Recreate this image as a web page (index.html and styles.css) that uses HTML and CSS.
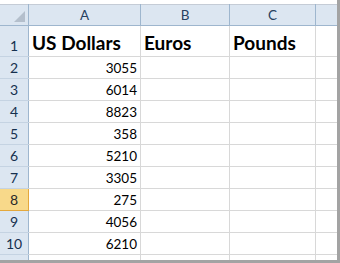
FILE: index.html
```html
<!DOCTYPE html>
<html lang="en">

<head>
    <meta charset="UTF-8">
    <title>Sheet1</title>
    <link rel="stylesheet" href="styles.css">
</head>

<body>
    <div class="sheet">
        <table class="grid">
            <thead>
                <tr>
                    <th class="corner"><span class="tri"></span></th>
                    <th class="col-a">A</th>
                    <th class="col-b">B</th>
                    <th class="col-c">C</th>
                    <th class="col-d"></th>
                </tr>
            </thead>
            <tbody>
                <tr class="title-row">
                    <th>1</th>
                    <td class="title">US Dollars</td>
                    <td class="title">Euros</td>
                    <td class="title">Pounds</td>
                    <td></td>
                </tr>
                <tr><th>2</th><td class="num">3055</td><td></td><td></td><td></td></tr>
                <tr><th>3</th><td class="num">6014</td><td></td><td></td><td></td></tr>
                <tr><th>4</th><td class="num">8823</td><td></td><td></td><td></td></tr>
                <tr><th>5</th><td class="num">358</td><td></td><td></td><td></td></tr>
                <tr><th>6</th><td class="num">5210</td><td></td><td></td><td></td></tr>
                <tr><th>7</th><td class="num">3305</td><td></td><td></td><td></td></tr>
                <tr><th class="active">8</th><td class="num">275</td><td></td><td></td><td></td></tr>
                <tr><th>9</th><td class="num">4056</td><td></td><td></td><td></td></tr>
                <tr><th>10</th><td class="num">6210</td><td></td><td></td><td></td></tr>
                <tr><th>11</th><td></td><td></td><td></td><td></td></tr>
            </tbody>
        </table>
    </div>
</body>

</html>
```

FILE: styles.css
```css
body {
    margin: 0;
    background-color: #ffffff;
    font-family: Lato, "Open Sans", sans-serif;
}

.sheet {
    width: 340px;
    height: 263px;
    padding-top: 4px;
    box-sizing: border-box;
    overflow: hidden;
    border-right: 3px solid #a3a3a3;
    border-bottom: 3px solid #a3a3a3;
    background-color: #ffffff;
}

.grid {
    width: 357px;
    border-collapse: collapse;
    table-layout: fixed;
    border-top: 1px solid #c5ccd6;
}

.grid th,
.grid td {
    padding: 0 3px;
    white-space: nowrap;
    overflow: hidden;
}

.grid td {
    border-right: 1px solid #d8d8d8;
    border-bottom: 1px solid #d8d8d8;
    height: 22px;
    font-size: 13.5px;
    color: #000000;
    vertical-align: bottom;
    padding-bottom: 2px;
    box-sizing: border-box;
}

.grid thead th {
    height: 20px;
    background-color: #dce6f1;
    border-right: 1px solid #9eb6ce;
    border-bottom: 1px solid #9eb6ce;
    font-weight: normal;
    font-size: 13.5px;
    color: #27415f;
    text-align: center;
    vertical-align: middle;
    padding: 0;
}

.grid tbody th {
    background-color: #dce6f1;
    border-right: 1px solid #9eb6ce;
    border-bottom: 1px solid #c5d3e2;
    font-weight: normal;
    font-size: 14px;
    color: #15304f;
    text-align: center;
    vertical-align: bottom;
    padding: 0 0 2px 0;
}

.grid tbody th.active {
    background-color: #f8d98a;
    border-right-color: #e4a83c;
    border-bottom-color: #e4a83c;
    color: #2a2a2a;
}

.grid .corner {
    width: 28px;
    position: relative;
}

.tri {
    position: absolute;
    right: 3px;
    bottom: 3px;
    width: 0;
    height: 0;
    border-left: 11px solid transparent;
    border-bottom: 11px solid #b4bfcc;
}

.grid .col-a {
    width: 111px;
}

.grid .col-b {
    width: 88px;
}

.grid .col-c {
    width: 85px;
}

.grid .col-d {
    width: 40px;
}

.grid .title-row td,
.grid .title-row th {
    height: 28px;
}

.grid td.title {
    font-size: 19px;
    font-weight: bold;
    padding-bottom: 2px;
}

.num {
    text-align: right;
}
```
